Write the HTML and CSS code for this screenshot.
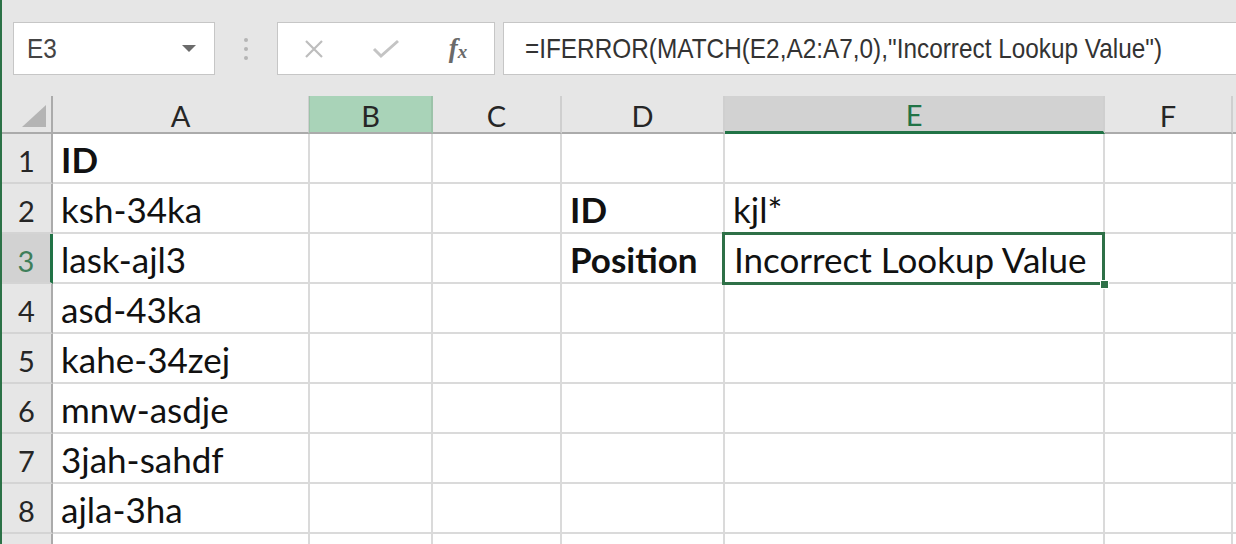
FILE: index.html
```html
<!DOCTYPE html>
<html>
<head>
	<meta charset="utf-8">
	<title>IFERROR MATCH</title>
	<link rel="stylesheet" href="styles.css">
</head>
<body>

	<div class="excel">
		<div class="toolbar">
			<div class="namebox">
				<span class="ref">E3</span>
				<svg class="drop" width="16" height="8" viewBox="0 0 16 8"><path d="M1 0 H15 L8 7 Z" fill="#6b6b6b"/></svg>
			</div>
			<div class="grip"><i></i><i></i><i></i></div>
			<div class="fbuttons">
				<span class="fbtn">
					<svg width="20" height="18" viewBox="0 0 20 18"><path d="M2 1 L18 17 M18 1 L2 17" stroke="#bdbdbd" stroke-width="2.2" fill="none"/></svg>
				</span>
				<span class="fbtn">
					<svg width="28" height="20" viewBox="0 0 28 20"><path d="M2 10 L9 17 L26 2" stroke="#c4c4c4" stroke-width="3" fill="none"/></svg>
				</span>
				<span class="fbtn fx"><i class="f">f</i><i class="x">x</i></span>
			</div>
			<div class="formula">
				<span class="ftext">=IFERROR(MATCH(E2,A2:A7,0),"Incorrect Lookup Value")</span>
			</div>
		</div>

		<div class="sheet">
			<div class="hd corner">
				<svg width="24" height="22" viewBox="0 0 24 22"><path d="M24 0 V22 H0 Z" fill="#b4b4b4"/></svg>
			</div>
			<div class="hd col">A</div>
			<div class="hd col col-green">B</div>
			<div class="hd col">C</div>
			<div class="hd col">D</div>
			<div class="hd col col-active">E</div>
			<div class="hd col">F</div>
			<div class="hd col"></div>

			<div class="hd row">1</div>
			<div class="cell bold">ID</div><div class="cell"></div><div class="cell"></div><div class="cell"></div><div class="cell"></div><div class="cell"></div><div class="cell"></div>

			<div class="hd row">2</div>
			<div class="cell">ksh-34ka</div><div class="cell"></div><div class="cell"></div><div class="cell bold">ID</div><div class="cell">kjl*</div><div class="cell"></div><div class="cell"></div>

			<div class="hd row row-active">3</div>
			<div class="cell">lask-ajl3</div><div class="cell"></div><div class="cell"></div><div class="cell bold">Position</div>
			<div class="cell selected">Incorrect Lookup Value<span class="sel"><span class="handle"></span></span></div>
			<div class="cell"></div><div class="cell"></div>

			<div class="hd row">4</div>
			<div class="cell">asd-43ka</div><div class="cell"></div><div class="cell"></div><div class="cell"></div><div class="cell"></div><div class="cell"></div><div class="cell"></div>

			<div class="hd row">5</div>
			<div class="cell">kahe-34zej</div><div class="cell"></div><div class="cell"></div><div class="cell"></div><div class="cell"></div><div class="cell"></div><div class="cell"></div>

			<div class="hd row">6</div>
			<div class="cell">mnw-asdje</div><div class="cell"></div><div class="cell"></div><div class="cell"></div><div class="cell"></div><div class="cell"></div><div class="cell"></div>

			<div class="hd row">7</div>
			<div class="cell">3jah-sahdf</div><div class="cell"></div><div class="cell"></div><div class="cell"></div><div class="cell"></div><div class="cell"></div><div class="cell"></div>

			<div class="hd row">8</div>
			<div class="cell">ajla-3ha</div><div class="cell"></div><div class="cell"></div><div class="cell"></div><div class="cell"></div><div class="cell"></div><div class="cell"></div>

			<div class="hd row"></div>
			<div class="cell"></div><div class="cell"></div><div class="cell"></div><div class="cell"></div><div class="cell"></div><div class="cell"></div><div class="cell"></div>
		</div>
	</div>

</body>
</html>
```

FILE: styles.css
```css
* {
	box-sizing: border-box;
}
html, body {
	margin: 0;
	height: 100%;
	overflow: hidden;
	background: #e6e6e6;
}
.excel {
	height: 100%;
	border-left: 2px solid #2c7247;
	font-family: Lato, "Liberation Sans", sans-serif;
}

/* formula bar */
.toolbar {
	height: 96px;
	display: flex;
	align-items: flex-start;
	padding: 22px 0 0 11px;
	background: #e6e6e6;
}
.namebox,
.fbuttons,
.formula {
	height: 53px;
	background: #fff;
	border: 1px solid #c6c6c6;
	display: flex;
	align-items: center;
}
.namebox {
	width: 202px;
	flex-shrink: 0;
	padding: 0 13px;
	justify-content: space-between;
}
.ref,
.ftext {
	font-family: "Liberation Sans", Arial, sans-serif;
	font-size: 28px;
	color: #444;
	display: inline-block;
	transform: scaleX(0.87);
	transform-origin: left center;
	white-space: nowrap;
}
.drop {
	margin-right: 4px;
}
.grip {
	width: 62px;
	height: 53px;
	flex-shrink: 0;
	display: flex;
	flex-direction: column;
	align-items: center;
	justify-content: center;
	gap: 5px;
}
.grip i {
	width: 4px;
	height: 4px;
	border-radius: 50%;
	background: #b5b5b5;
}
.fbuttons {
	width: 218px;
	flex-shrink: 0;
}
.fbtn {
	flex: 1;
	display: flex;
	justify-content: center;
	align-items: center;
}
.fx {
	font-family: "Liberation Serif", serif;
	color: #6a6a6a;
	font-weight: bold;
}
.fx .f {
	font-size: 27px;
}
.fx .x {
	font-size: 19px;
	margin-top: 6px;
}
.formula {
	flex: 1;
	min-width: 0;
	overflow: hidden;
	margin-left: 8px;
	border-right: none;
	padding-left: 21px;
}
.ftext {
	color: #333;
}

/* grid */
.sheet {
	display: grid;
	grid-template-columns: 51px 257px 123px 129px 163px 380px 128px 1fr;
	grid-template-rows: 38px repeat(9, 50px);
	background: #fff;
}
.hd {
	background: #e6e6e6;
	color: #262626;
	font-size: 29px;
	display: flex;
	align-items: center;
	justify-content: center;
}
.corner {
	border-right: 2px solid #ababab;
	border-bottom: 2px solid #ababab;
	justify-content: flex-end;
	align-items: flex-end;
	padding: 0 5px 5px 0;
}
.corner svg {
	display: block;
}
.col {
	border-right: 2px solid #cfcfcf;
	border-bottom: 2px solid #ababab;
	padding-top: 2px;
}
.col-green {
	background: #a9d3b8;
	border-right-color: #9cc3a9;
	border-left: 1px solid #9cc3a9;
	margin-left: -1px;
}
.col-active {
	background: #d2d2d2;
	color: #217346;
	border-bottom: 3px solid #217346;
}
.row {
	border-right: 2px solid #ababab;
	border-bottom: 2px solid #d4d4d4;
	padding-top: 4px;
}
.row-active {
	background: #d2d2d2;
	color: #3f7f5a;
	border-right: 3px solid #217346;
}
.cell {
	border-right: 2px solid #dadada;
	border-bottom: 2px solid #dadada;
	font-size: 35px;
	color: #111;
	display: flex;
	align-items: center;
	padding: 2px 0 0 8px;
	white-space: nowrap;
}
.bold {
	font-weight: bold;
}
.selected {
	position: relative;
	padding-left: 9px;
}
.sel {
	position: absolute;
	left: -3px;
	top: -2px;
	right: -2px;
	bottom: -3px;
	border: 3px solid #2e7047;
	z-index: 2;
}
.handle {
	position: absolute;
	right: -7px;
	bottom: -7px;
	width: 9px;
	height: 9px;
	background: #2e7047;
	border: 1px solid #fff;
}
```
